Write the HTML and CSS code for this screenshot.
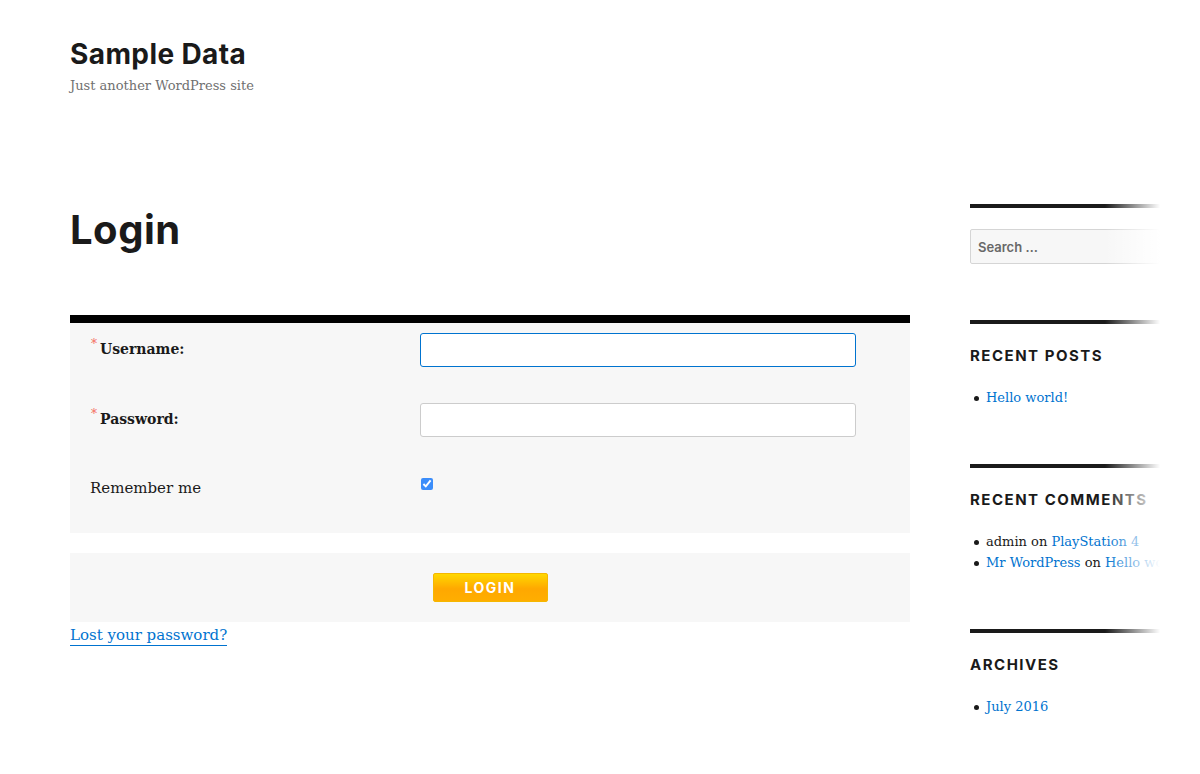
FILE: index.html
```html
<!DOCTYPE html>
<html lang="en">
<head>
    <meta charset="UTF-8">
    <title>Login - Sample Data</title>
    <link rel="stylesheet" href="styles.css">
</head>
<body>
    <div class="page">
        <div class="main">
            <header class="site-header">
                <div class="site-title">Sample Data</div>
                <div class="site-description">Just another WordPress site</div>
            </header>

            <h1 class="entry-title">Login</h1>

            <form class="login-form">
                <div class="form-fields">
                    <div class="form-row">
                        <label class="field-label required"><span class="req">*</span>Username:</label>
                        <input type="text" class="text-input focused">
                    </div>
                    <div class="form-row">
                        <label class="field-label required"><span class="req">*</span>Password:</label>
                        <input type="password" class="text-input">
                    </div>
                    <div class="form-row short">
                        <label class="field-label plain">Remember me</label>
                        <input type="checkbox" class="remember" checked>
                    </div>
                </div>
                <div class="form-submit">
                    <button type="button" class="login-btn">LOGIN</button>
                </div>
            </form>

            <a href="#" class="lost-link">Lost your password?</a>
        </div>

        <aside class="sidebar">
            <section class="widget widget-search">
                <input type="search" class="search-field" placeholder="Search …">
            </section>

            <section class="widget">
                <h2 class="widget-title">Recent Posts</h2>
                <ul>
                    <li><a href="#">Hello world!</a></li>
                </ul>
            </section>

            <section class="widget">
                <h2 class="widget-title">Recent Comments</h2>
                <ul>
                    <li>admin on <a href="#">PlayStation 4</a></li>
                    <li><a href="#">Mr WordPress</a> on <a href="#">Hello world!</a></li>
                </ul>
            </section>

            <section class="widget">
                <h2 class="widget-title">Archives</h2>
                <ul>
                    <li><a href="#">July 2016</a></li>
                </ul>
            </section>
        </aside>
    </div>
</body>
</html>
```

FILE: styles.css
```css
* {
    margin: 0;
    padding: 0;
    box-sizing: border-box;
}

body {
    font-family: "DejaVu Serif", "Liberation Serif", serif;
    font-size: 15px;
    color: #1a1a1a;
    background: #fff;
    overflow: hidden;
}

a {
    color: #0073cf;
    text-decoration: none;
}

.page {
    display: flex;
    gap: 60px;
    padding-left: 70px;
}

.main {
    width: 840px;
}

/* header */
.site-header {
    padding-top: 38px;
}

.site-title {
    font-family: Inter, "Noto Sans", sans-serif;
    font-size: 28px;
    font-weight: 700;
    line-height: 32px;
    letter-spacing: 0.4px;
    color: #1a1a1a;
}

.site-description {
    margin-top: 8px;
    font-size: 13px;
    color: #707070;
}

.entry-title {
    margin-top: 113px;
    font-family: Inter, "Noto Sans", sans-serif;
    font-size: 40px;
    font-weight: 700;
    line-height: 48px;
    letter-spacing: 0.5px;
    color: #1a1a1a;
}

/* login form */
.login-form {
    margin-top: 61px;
}

.form-fields {
    border-top: 8px solid #000;
    background: #f7f7f7;
    padding: 10px 54px 33px 20px;
    display: flex;
    flex-direction: column;
    gap: 36px;
}

.form-row {
    display: flex;
    align-items: center;
    height: 34px;
}

.form-row.short {
    height: 24px;
    margin-top: 3px;
}

.field-label {
    width: 330px;
    font-size: 15px;
}

.field-label.required {
    font-size: 14px;
    font-weight: 700;
    padding-left: 1px;
    padding-bottom: 6px;
}

.req {
    color: #f46a5e;
    font-weight: 400;
    font-size: 12px;
    vertical-align: 6px;
    margin-right: 3px;
}

.text-input {
    flex: 1;
    height: 34px;
    border: 1px solid #ccc;
    border-radius: 3px;
    background: #fff;
}

.text-input.focused {
    border-color: #0073cf;
}

.remember {
    width: 12px;
    height: 12px;
    margin: -8px 0 0 1px;
    accent-color: #3b8dfa;
}

.form-submit {
    margin-top: 20px;
    background: #f7f7f7;
    height: 69px;
    display: flex;
    justify-content: center;
    align-items: center;
}

.login-btn {
    width: 115px;
    height: 29px;
    border: 1px solid #f5b700;
    border-radius: 2px;
    background: linear-gradient(#ffd800, #ffa800 55%, #ffae00);
    color: #fff;
    font-family: Inter, "Noto Sans", sans-serif;
    font-size: 14px;
    font-weight: 700;
    letter-spacing: 1.5px;
}

.lost-link {
    display: inline-block;
    margin-top: 3px;
    font-size: 15px;
    line-height: 20px;
    border-bottom: 1px solid #0073cf;
}

/* sidebar */
.sidebar {
    position: relative;
    width: 230px;
    padding-top: 204px;
}

/* fade-out over the right edge of the widgets */
.sidebar::after {
    content: "";
    position: absolute;
    top: 0;
    bottom: 0;
    left: 135px;
    right: 0;
    background: linear-gradient(to right, rgba(255, 255, 255, 0), #fff 58%);
}

.widget {
    border-top: 4px solid #1a1a1a;
    padding-top: 22px;
    white-space: nowrap;
}

.widget-search {
    height: 116px;
    padding-top: 21px;
}

.search-field {
    width: 190px;
    height: 35px;
    padding: 0 7px;
    border: 1px solid #d5d5d5;
    border-radius: 2px;
    background: #f7f7f7;
    font-family: Inter, "Noto Sans", sans-serif;
    font-size: 13px;
    font-weight: 600;
}

.search-field::placeholder {
    color: #686868;
}

.widget-title {
    font-family: Inter, "Noto Sans", sans-serif;
    font-size: 15px;
    font-weight: 700;
    letter-spacing: 1.5px;
    text-transform: uppercase;
    line-height: 20px;
    margin-bottom: 21px;
}

.widget ul {
    list-style: none;
    margin-bottom: 56px;
}

.widget li {
    font-size: 13px;
    line-height: 21px;
    padding-left: 16px;
    position: relative;
}

.widget li::before {
    content: "";
    position: absolute;
    left: 4px;
    top: 9px;
    width: 5px;
    height: 5px;
    border-radius: 50%;
    background: #1a1a1a;
}
```
